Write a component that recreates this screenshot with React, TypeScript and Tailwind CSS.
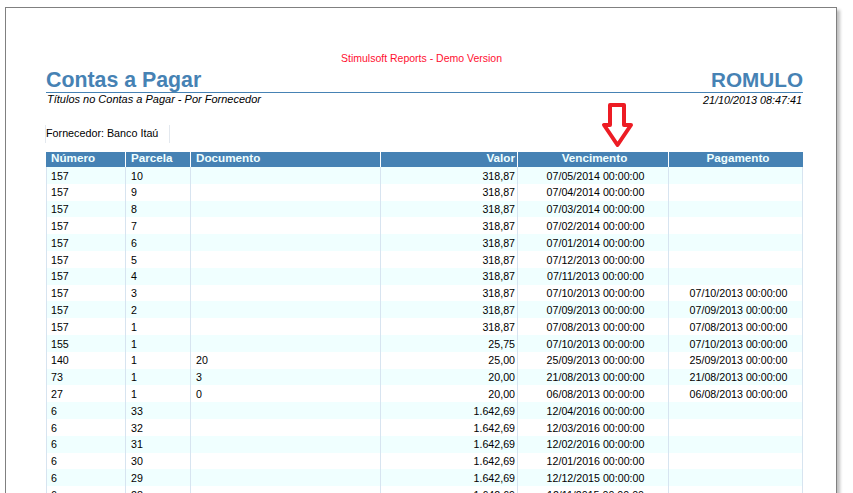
const rows: [string, string, string, string, string, string][] = [
  ['157', '10', '', '318,87', '07/05/2014 00:00:00', ''],
  ['157', '9', '', '318,87', '07/04/2014 00:00:00', ''],
  ['157', '8', '', '318,87', '07/03/2014 00:00:00', ''],
  ['157', '7', '', '318,87', '07/02/2014 00:00:00', ''],
  ['157', '6', '', '318,87', '07/01/2014 00:00:00', ''],
  ['157', '5', '', '318,87', '07/12/2013 00:00:00', ''],
  ['157', '4', '', '318,87', '07/11/2013 00:00:00', ''],
  ['157', '3', '', '318,87', '07/10/2013 00:00:00', '07/10/2013 00:00:00'],
  ['157', '2', '', '318,87', '07/09/2013 00:00:00', '07/09/2013 00:00:00'],
  ['157', '1', '', '318,87', '07/08/2013 00:00:00', '07/08/2013 00:00:00'],
  ['155', '1', '', '25,75', '07/10/2013 00:00:00', '07/10/2013 00:00:00'],
  ['140', '1', '20', '25,00', '25/09/2013 00:00:00', '25/09/2013 00:00:00'],
  ['73', '1', '3', '20,00', '21/08/2013 00:00:00', '21/08/2013 00:00:00'],
  ['27', '1', '0', '20,00', '06/08/2013 00:00:00', '06/08/2013 00:00:00'],
  ['6', '33', '', '1.642,69', '12/04/2016 00:00:00', ''],
  ['6', '32', '', '1.642,69', '12/03/2016 00:00:00', ''],
  ['6', '31', '', '1.642,69', '12/02/2016 00:00:00', ''],
  ['6', '30', '', '1.642,69', '12/01/2016 00:00:00', ''],
  ['6', '29', '', '1.642,69', '12/12/2015 00:00:00', ''],
  ['6', '28', '', '1.642,69', '12/11/2015 00:00:00', ''],
];

const columns = 'grid grid-cols-[79px_65px_190px_137px_151px_135px]';

function ReportRow({ row, striped }: { row: (typeof rows)[number]; striped: boolean }) {
  return (
    <div className={`${columns} h-[16.8px] items-stretch leading-[16px] text-[10.67px] text-black ${striped ? 'bg-[#f0ffff]' : 'bg-white'}`}>
      <div className="border-l border-[#d7e4f0] pl-[4px] pt-[0.6px]">{row[0]}</div>
      <div className="border-l border-[#d7e4f0] pl-[5px] pt-[0.6px]">{row[1]}</div>
      <div className="border-l border-[#d7e4f0] pl-[5px] pt-[0.6px]">{row[2]}</div>
      <div className="border-l border-[#d7e4f0] pr-[2px] pt-[0.6px] text-right">{row[3]}</div>
      <div className="border-l border-[#d7e4f0] pl-[5px] pt-[0.6px] text-center">{row[4]}</div>
      <div className="border-x border-[#d7e4f0] pl-[6px] pt-[0.6px] text-center">{row[5]}</div>
    </div>
  );
}

export default function App() {
  return (
    <div className="relative h-[493px] w-[853px] overflow-hidden bg-white font-['Liberation_Sans',Arial,sans-serif]">
      <div className="ml-[5px] mt-[7px] h-[520px] w-[832px] border border-[#808080] bg-white pl-[40px] pr-[33px] pt-[44px] shadow-[3px_3px_3px_rgba(0,0,0,0.25)]">
        <div className="pr-[6px] text-center text-[10.5px] leading-[12px] text-[#ff1030]">Stimulsoft Reports - Demo Version</div>

        <div className="mt-[4px] flex h-[25px] items-end justify-between border-b border-[#4682b4] text-[21.33px] font-bold leading-[24px] text-[#4682b4]">
          <span>Contas a Pagar</span>
          <span className="text-[20.7px]">ROMULO</span>
        </div>
        <div className="flex items-start justify-between text-[11px] italic leading-[13px] text-black">
          <span className="pl-[1px]">Títulos no Contas a Pagar - Por Fornecedor</span>
          <span className="pr-[1px] pt-[1px] text-[10.8px]">21/10/2013 08:47:41</span>
        </div>

        <div className="-ml-[1px] mt-[18px] flex h-[18px] w-[125px] items-center border-x border-[#e3e8ee] pb-[2px] text-[10.75px] leading-[14px] text-black">
          Fornecedor: Banco Itaú
        </div>

        <div className={`${columns} mt-[9px] h-[15px] bg-[#4682b4] text-[11.7px] font-bold leading-[12px] text-[#f0ffff]`}>
          <div className="pl-[5px]">Número</div>
          <div className="border-l border-white pl-[5px]">Parcela</div>
          <div className="border-l border-white pl-[5px]">Documento</div>
          <div className="border-l border-white pr-[2px] text-right">Valor</div>
          <div className="border-l border-white pl-[3px] text-center">Vencimento</div>
          <div className="border-l border-white pl-[4px] text-center">Pagamento</div>
        </div>
        {rows.map((row, i) => (
          <ReportRow key={i} row={row} striped={i % 2 === 0} />
        ))}
      </div>

      <svg className="absolute left-[600px] top-[101px]" width="36" height="48" viewBox="0 0 36 48" fill="#ffffff">
        <polygon points="10,4 24,4 24,24 31,24 17.5,44 4,24 10,24" stroke="#ed1c24" strokeWidth="4" strokeLinejoin="round" />
      </svg>
    </div>
  );
}
